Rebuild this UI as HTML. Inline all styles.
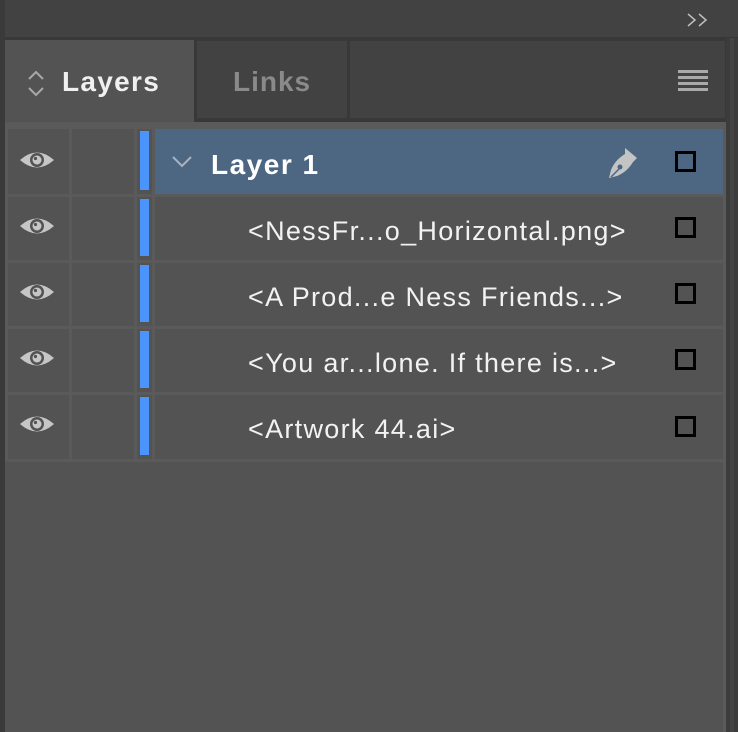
<!DOCTYPE html>
<html><head><style>
*{margin:0;padding:0;box-sizing:border-box}
body{width:738px;height:732px;background:#535353;position:relative;overflow:hidden;font-family:"Liberation Sans",sans-serif}
.a{position:absolute}
.t{color:#f2f2f2;font-size:27px;letter-spacing:1.3px;white-space:nowrap;line-height:30px}
.cb{position:absolute;left:675px;width:21px;height:21px;border:3px solid #000}
.bar{position:absolute;left:140px;width:9px;background:#4b94fb}
</style></head><body>
<div class="a" style="left:0;top:0;width:738px;height:38px;background:#424242"></div>
<div class="a" style="left:0;top:37px;width:738px;height:3px;background:#383838"></div>
<div class="a" style="left:0;top:0;width:5px;height:732px;background:#3a3a3a"></div>
<svg class="a" style="left:686px;top:12px" width="24" height="16"><path d="M2 2 L9 8 L2 14 M13 2 L20 8 L13 14" stroke="#bdbdbd" stroke-width="1.5" fill="none"/></svg>
<!-- tabs -->
<div class="a" style="left:5px;top:40px;width:189px;height:82px;background:#535353"></div>
<div class="a" style="left:194px;top:40px;width:544px;height:82px;background:#383838"></div>
<div class="a" style="left:197px;top:41px;width:150px;height:77px;background:#424242"></div>
<div class="a" style="left:350px;top:41px;width:375px;height:77px;background:#424242"></div>
<svg class="a" style="left:27px;top:70px" width="18" height="28"><path d="M2 9 L9 2 L16 9 M2 18 L9 25 L16 18" stroke="#a8a8a8" stroke-width="2" fill="none"/></svg>
<div class="a" style="left:62px;top:66px;color:#f0f0f0;font-size:28px;font-weight:bold;letter-spacing:1.3px">Layers</div>
<div class="a" style="left:233px;top:66px;color:#8a8a8a;font-size:28px;font-weight:bold;letter-spacing:1px">Links</div>
<div class="a" style="left:678px;top:70px;width:30px;height:3px;background:#aaa;box-shadow:0 6px 0 #aaa,0 12px 0 #aaa,0 18px 0 #aaa"></div>
<!-- right strip -->
<div class="a" style="left:723px;top:122px;width:3px;height:610px;background:#5a5a5a"></div>
<div class="a" style="left:726px;top:38px;width:12px;height:694px;background:#3c3c3c"></div>
<div class="a" style="left:730px;top:38px;width:4px;height:694px;background:#454545"></div>
<!-- grid lines -->
<div class="a" style="left:5px;top:122px;width:718px;height:7px;background:#5a5a5a"></div>
<div class="a" style="left:5px;top:122px;width:3px;height:340px;background:#5a5a5a"></div>
<div class="a" style="left:69px;top:129px;width:3px;height:332px;background:#5a5a5a"></div>
<div class="a" style="left:134px;top:129px;width:3px;height:332px;background:#5a5a5a"></div>
<div class="a" style="left:152px;top:129px;width:3px;height:332px;background:#5a5a5a"></div>
<div class="a" style="left:5px;top:194px;width:718px;height:3px;background:#5a5a5a"></div>
<div class="a" style="left:5px;top:260px;width:718px;height:3px;background:#5a5a5a"></div>
<div class="a" style="left:5px;top:326px;width:718px;height:3px;background:#5a5a5a"></div>
<div class="a" style="left:5px;top:392px;width:718px;height:3px;background:#5a5a5a"></div>
<div class="a" style="left:5px;top:459px;width:718px;height:3px;background:#5a5a5a"></div>
<!-- selected row -->
<div class="a" style="left:155px;top:129px;width:568px;height:65px;background:#4d6782"></div>
<!-- bars -->
<div class="bar" style="top:131px;height:59px"></div>
<div class="bar" style="top:199px;height:57px"></div>
<div class="bar" style="top:265px;height:57px"></div>
<div class="bar" style="top:331px;height:57px"></div>
<div class="bar" style="top:397px;height:58px"></div>
<!-- eyes -->
<svg width="0" height="0" style="position:absolute"><defs><g id="eye"><path d="M1 11 Q18 -4 35 11 Q18 26 1 11Z" fill="#c6c6c6"/><circle cx="18" cy="11" r="7" fill="#535353"/><circle cx="18" cy="11" r="4.5" fill="#c6c6c6"/><circle cx="16.5" cy="9.5" r="1.6" fill="#535353"/></g></defs></svg>
<svg class="a" style="left:19px;top:149px" width="36" height="22"><use href="#eye"/></svg>
<svg class="a" style="left:19px;top:215px" width="36" height="22"><use href="#eye"/></svg>
<svg class="a" style="left:19px;top:281px" width="36" height="22"><use href="#eye"/></svg>
<svg class="a" style="left:19px;top:347px" width="36" height="22"><use href="#eye"/></svg>
<svg class="a" style="left:19px;top:413px" width="36" height="22"><use href="#eye"/></svg>
<!-- layer 1 -->
<svg class="a" style="left:171px;top:155px" width="22" height="14"><path d="M2 2 L11 11 L20 2" stroke="#a9b3bd" stroke-width="2" fill="none"/></svg>
<div class="a t" style="left:211px;top:150px;font-weight:bold;font-size:28px;letter-spacing:1.5px;color:#fff">Layer 1</div>
<svg class="a" style="left:605px;top:146px" width="34" height="34"><path d="M20 2 L32 12 L28 16 Q22 26 12 30 L4 32 L6 24 Q10 14 20 8 Z" fill="#c4c4c4"/><circle cx="15" cy="21" r="2.5" fill="#4d6782"/><path d="M14 23 L6 31" stroke="#4d6782" stroke-width="1.5"/></svg>
<div class="cb" style="top:151px"></div>
<div class="a t" style="left:248px;top:216px">&lt;NessFr...o_Horizontal.png&gt;</div>
<div class="cb" style="top:217px"></div>
<div class="a t" style="left:248px;top:282px">&lt;A Prod...e Ness Friends...&gt;</div>
<div class="cb" style="top:283px"></div>
<div class="a t" style="left:248px;top:348px">&lt;You ar...lone. If there is...&gt;</div>
<div class="cb" style="top:349px"></div>
<div class="a t" style="left:248px;top:414px">&lt;Artwork 44.ai&gt;</div>
<div class="cb" style="top:416px"></div>
</body></html>
